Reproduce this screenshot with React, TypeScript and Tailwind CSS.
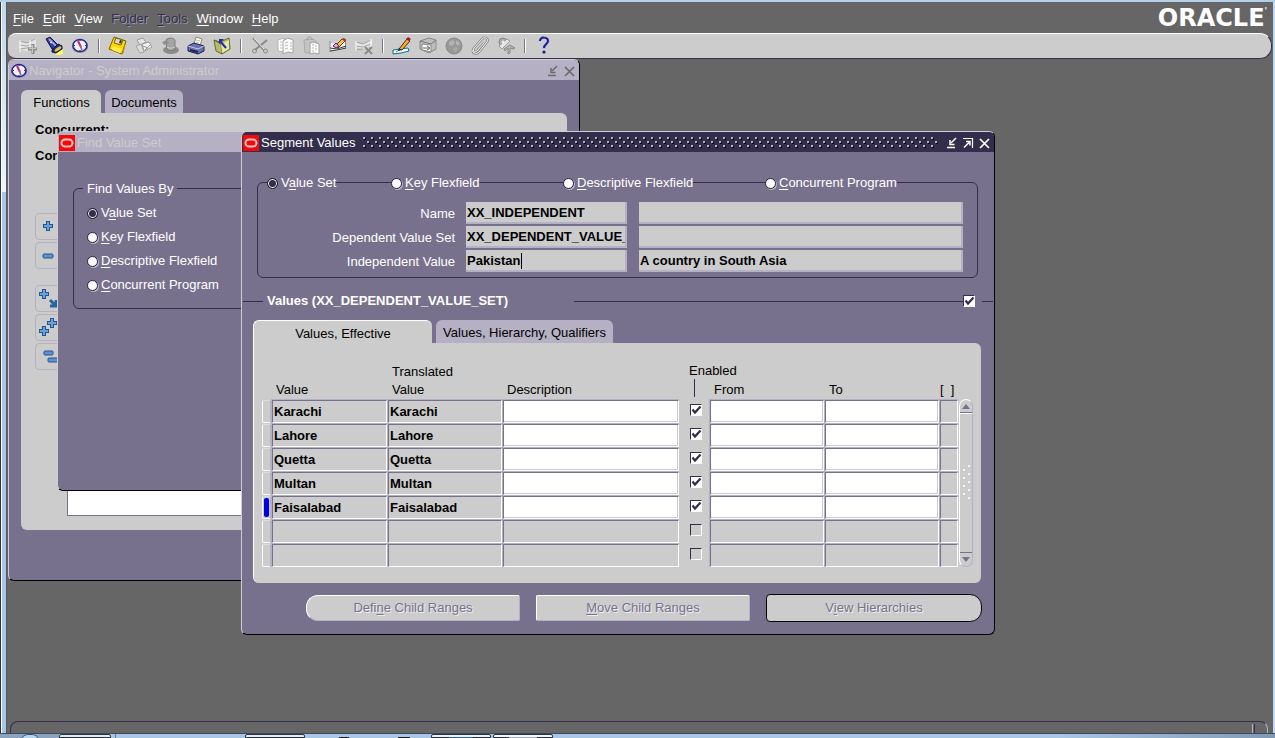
import React from "react";

const menuItems = [
  { key: "F", before: "", after: "ile" },
  { key: "E", before: "", after: "dit" },
  { key: "V", before: "", after: "iew" },
  { key: "l", before: "Fo", after: "der", disabled: true },
  { key: "T", before: "", after: "ools", disabled: true },
  { key: "W", before: "", after: "indow" },
  { key: "H", before: "", after: "elp" },
];

const rows = [
  { value: "Karachi", enabled: true },
  { value: "Lahore", enabled: true },
  { value: "Quetta", enabled: true },
  { value: "Multan", enabled: true },
  { value: "Faisalabad", enabled: true, current: true },
  { value: "", enabled: false },
  { value: "", enabled: false },
];

const findOptions = [
  { key: "a", before: "V", after: "lue Set" },
  { key: "K", before: "", after: "ey Flexfield" },
  { key: "D", before: "", after: "escriptive Flexfield" },
  { key: "C", before: "", after: "oncurrent Program" },
];

const Icon: React.FC<{ children: React.ReactNode }> = ({ children }) => (
  <svg width="20" height="20" viewBox="0 0 20 20" fill="none" aria-hidden="true">
    {children}
  </svg>
);

const NewIcon = () => (
  <Icon>
    <path d="M1 5l8 2 9-4v9l-9 3-8-2z" fill="#e4e4e4" />
    <path d="M1 5l8 2 8-4M1 9l8 1 5-2M1 13l8-1 4-1" stroke="#a5a5a5" />
    <path d="M2 4v12M12 4v8" stroke="#fff" />
    <path d="M15 8v10M10 13h9" stroke="#8e8e8e" strokeWidth="3" />
    <path d="M14.500 9v8M11 12.500h7" stroke="#c4c4c4" />
  </Icon>
);

const FlashlightIcon = () => (
  <Icon>
    <ellipse cx="15" cy="16" rx="4" ry="3" fill="#ffff5a" />
    <path d="M2 3l4-2 8 8-3 5-3-1z" fill="#2f3c9c" stroke="#10104a" />
    <path d="M5 3l7 7" stroke="#9aa6e8" strokeWidth="2" />
    <path d="M8 14l6-6 4 2v3l-6 4-4-1z" fill="#26267a" stroke="#10104a" />
    <ellipse cx="14" cy="13" rx="4" ry="1.5" transform="rotate(-35 14 13)" fill="#d8c83c" />
    <path d="M6 6l2 1" stroke="#fff" />
    <path d="M4 2l1 1" stroke="#d33" />
  </Icon>
);

const CompassIcon = () => (
  <Icon>
    <ellipse cx="10" cy="11" rx="8" ry="6" fill="#8e8eaa" />
    <ellipse cx="10" cy="9.5" rx="7" ry="6" fill="#f2f2fa" stroke="#27278f" strokeWidth="1.6" />
    <path d="M10 4v1M10 14v1M4 9.5h1M15 9.5h1" stroke="#27278f" />
    <path d="M8 5l3 6" stroke="#d0206c" strokeWidth="2" />
    <path d="M10 9l2 5" stroke="#8a5a8c" strokeWidth="1.500" />
  </Icon>
);

const SaveIcon = () => (
  <Icon>
    <path d="M6 1l12 4-4 13-13-5z" fill="#ffd500" stroke="#7d6200" />
    <path d="M8 2l7 2-2 5-7-2z" fill="#d9d9c8" stroke="#7d6200" />
    <path d="M12 4l2 .6-1 3-2-.6z" fill="#333" />
    <path d="M5 10l9 3-2 4-8-3z" fill="#ffec4a" />
    <path d="M15 17l2-9" stroke="#b98f00" />
  </Icon>
);

const NextStepIcon = () => (
  <Icon>
    <path d="M3 4l6-2 3 4-6 3z" fill="#e6e6e6" stroke="#9a9a9a" />
    <path d="M8 8l7-2 3 5-8 4z" fill="#f4f4f4" stroke="#9a9a9a" />
    <path d="M2 10l5-2 3 8-4 1z" fill="#ddd" stroke="#a5a5a5" />
    <path d="M9 10l5 2M11 14l5-5" stroke="#999" />
  </Icon>
);

const ResponsibilityIcon = () => (
  <Icon>
    <ellipse cx="11" cy="14" rx="8" ry="4" fill="#8b8b8b" />
    <path d="M6 4c3-3 8-2 9 0v9c-3 2-6 2-8 0z" fill="#a4a4a4" stroke="#7a7a7a" />
    <path d="M2 6l5-2 2 3-5 2z" fill="#8f8f8f" />
    <path d="M7 11c3 2 6 1 8 0" stroke="#d8d8d8" />
  </Icon>
);

const PrintIcon = () => (
  <Icon>
    <path d="M8 8l2-7 6 2-2 7z" fill="#fff" stroke="#8a8a6a" />
    <path d="M10 4l4 1M10 6l3 1" stroke="#bba" />
    <path d="M2 10l6-3 10 3v5l-6 3-10-3z" fill="#6a72b0" stroke="#1c1c50" />
    <path d="M2 10l10 3 6-3" stroke="#c5c9ea" />
    <path d="M4 14l8 2" stroke="#20204f" strokeWidth="2" />
  </Icon>
);

const CloseFormIcon = () => (
  <Icon>
    <path d="M2 4l6 2 9-4 1 11-8 5-6-3z" fill="#b9b96a" stroke="#6b6b28" />
    <path d="M2 4l7 4 1 10" stroke="#6b6b28" />
    <path d="M9 8l8-4v9l-7 4z" fill="#e6e6a8" />
    <path d="M14 12L8 5" stroke="#1b2fae" strokeWidth="2" />
    <path d="M7 3h5l-5 5z" fill="#1b2fae" />
  </Icon>
);

const CutIcon = () => (
  <Icon>
    <path d="M3 2l11 12M17 4L5 14" stroke="#8a8a8a" strokeWidth="2" />
    <path d="M4 2l10 11" stroke="#eee" />
    <circle cx="15.500" cy="15" r="2" stroke="#8a8a8a" />
    <circle cx="4.500" cy="15" r="2" stroke="#8a8a8a" />
  </Icon>
);

const CopyIcon = () => (
  <Icon>
    <path d="M2 4l6-2v14l-6-1z" fill="#fff" stroke="#b4b4b4" />
    <path d="M7 5l5-3 5 2v13l-5-1-5 2z" fill="#fafafa" stroke="#a4a4a4" />
    <path d="M4 6h2M4 9h2M4 12h2M9 7l3-1M9 10l3-1M9 13l3-1M14 7h2M14 10h2M14 13h2" stroke="#bcbcbc" />
  </Icon>
);

const PasteIcon = () => (
  <Icon>
    <path d="M2 4l9-1 3 2v11l-11 1z" fill="#c4c4c4" stroke="#aaa" />
    <path d="M5 4c0-4 5-4 5 0" stroke="#999" />
    <path d="M8 7l4-1 5 2v10l-5-1-4 1z" fill="#fafafa" stroke="#a0a0a0" />
    <path d="M10 9h2M10 12h2M10 15h2M13 10h2M13 13h2" stroke="#b4b4b4" />
  </Icon>
);

const ClearIcon = () => (
  <Icon>
    <path d="M2 7l7 1 9-4v7l-9 4-7-1z" fill="#f2f2f2" />
    <path d="M2 5v11M17.500 4v9" stroke="#8a8a8a" />
    <path d="M2 12l7 1 9-3M2 15l7-1 9-2" stroke="#3c3c3c" />
    <path d="M7 10l7-7 4 1-8 8z" fill="#f0c050" stroke="#6b3a10" />
    <path d="M5 10l3-3 3 3-3 2z" fill="#e0a8c8" stroke="#5a2a6a" />
    <path d="M14 3l2-1 2 2-2 1z" fill="#b02a10" />
  </Icon>
);

const DeleteIcon = () => (
  <Icon>
    <path d="M2 6l7 2 9-5v6l-9 4-7-2z" fill="#e6e6e6" />
    <path d="M2 6l7 2 8-4M2 10l7 1 8-3M2 14l7-1" stroke="#a5a5a5" />
    <path d="M2 5v10M17 3v8" stroke="#fff" />
    <path d="M11 11l7 7M18 11l-7 7" stroke="#8a8a8a" strokeWidth="2" />
  </Icon>
);

const EditFieldIcon = () => (
  <Icon>
    <path d="M1 14l7-1 8-1 1 3-8 2-8 1z" fill="#e8ffff" stroke="#1a6a80" />
    <path d="M4 16l5-3" stroke="#28a0b0" />
    <path d="M7 13l8-10 3 2-8 9z" fill="#efb03a" stroke="#4a2c08" />
    <path d="M14 3l2-2 3 2-2 2z" fill="#b01818" />
    <path d="M6 15l1-3 3 2z" fill="#222" />
  </Icon>
);

const ZoomIcon = () => (
  <Icon>
    <path d="M2 5l9-3 7 2v9l-7 4-9-4z" fill="#bdbdbd" stroke="#8a8a8a" />
    <path d="M4 8l9 1v7l-9-2z" fill="#fafafa" stroke="#888" />
    <path d="M2 5l11 3 5-4" stroke="#777" />
    <path d="M5 12h6M9 10l3 2-3 2" stroke="#666" />
  </Icon>
);

const GlobeIcon = () => (
  <Icon>
    <circle cx="10" cy="10" r="8" fill="#989898" stroke="#8a8a8a" />
    <path d="M5 6l4-2 2 3-3 3-3-1zM12 4l4 3-2 3-2-2z" fill="#b4b4b4" />
    <path d="M9 12l3-1 2 2-3 4z" fill="#a8a8a8" />
  </Icon>
);

const AttachIcon = () => (
  <Icon>
    <path d="M14 7l-7 8c-2 2-5 0-3-3l8-9c3-3 7 0 5 3l-8 10c-3 3-7 1-6-2" stroke="#8c8c8c" strokeWidth="2.500" />
    <path d="M14 7l-7 8c-2 2-5 0-3-3l8-9c3-3 7 0 5 3l-8 10c-3 3-7 1-6-2" stroke="#f4f4f4" />
  </Icon>
);

const ToolsIcon = () => (
  <Icon>
    <circle cx="7" cy="6" r="4" fill="#aaa" stroke="#888" />
    <path d="M3 10l8-7 3 2-8 8z" fill="#e6e6e6" stroke="#999" />
    <path d="M8 13l6-4 5 3-2 1-3-1v5l-2 1v-6l-3 3z" fill="#b5b5b5" stroke="#8a8a8a" />
    <circle cx="7" cy="6" r="1.500" fill="#eee" />
  </Icon>
);

const HelpIcon = () => (
  <Icon>
    <path d="M6 5c0-5 9-4 8 0 0 3-4 3-4 8" stroke="#b8b8d8" strokeWidth="3" />
    <path d="M6 5c0-5 8-4 8 0 0 3-4 3-4 7" stroke="#1a1a9a" strokeWidth="2" />
    <circle cx="10" cy="16" r="1.600" fill="#1a1a9a" />
  </Icon>
);

const toolGroups = [
  [
    { name: "New", icon: <NewIcon /> },
    { name: "Find", icon: <FlashlightIcon /> },
    { name: "Show Navigator", icon: <CompassIcon /> },
  ],
  [
    { name: "Save", icon: <SaveIcon /> },
    { name: "Next Step", icon: <NextStepIcon /> },
    { name: "Switch Responsibilities", icon: <ResponsibilityIcon /> },
    { name: "Print", icon: <PrintIcon /> },
    { name: "Close Form", icon: <CloseFormIcon /> },
  ],
  [
    { name: "Cut", icon: <CutIcon /> },
    { name: "Copy", icon: <CopyIcon /> },
    { name: "Paste", icon: <PasteIcon /> },
    { name: "Clear Record", icon: <ClearIcon /> },
    { name: "Delete", icon: <DeleteIcon /> },
  ],
  [
    { name: "Edit Field", icon: <EditFieldIcon /> },
    { name: "Zoom", icon: <ZoomIcon /> },
    { name: "Translations", icon: <GlobeIcon /> },
    { name: "Attachments", icon: <AttachIcon /> },
    { name: "Folder Tools", icon: <ToolsIcon /> },
  ],
  [{ name: "Window Help", icon: <HelpIcon /> }],
];

const OracleBadge = () => (
  <svg width="16" height="16" viewBox="0 0 16 16" aria-hidden="true">
    <rect width="16" height="16" fill="#f40808" />
    <rect x="2.500" y="4.500" width="11" height="7" rx="3.500" fill="none" stroke="#ffc4c4" strokeWidth="2" />
  </svg>
);

const MinimizeIcon = () => (
  <svg width="12" height="12" viewBox="0 0 12 12" fill="none" stroke="currentColor" aria-hidden="true">
    <path d="M1 10.500h8" strokeWidth="1.500" />
    <path d="M10 1L5 6" strokeWidth="1.500" />
    <path d="M4 3v4.500h4.500" strokeWidth="1.500" />
  </svg>
);

const MaximizeIcon = () => (
  <svg width="12" height="12" viewBox="0 0 12 12" fill="none" stroke="currentColor" aria-hidden="true">
    <path d="M1 1.500h9.500V11" strokeWidth="1.200" />
    <path d="M2 10.500l5-5M4 4.500h4v4" strokeWidth="1.500" />
  </svg>
);

const CloseIcon = () => (
  <svg width="12" height="12" viewBox="0 0 12 12" fill="none" stroke="currentColor" aria-hidden="true">
    <path d="M2 2l9 9M11 2l-9 9" strokeWidth="1.700" />
  </svg>
);

const Grip = () => (
  <svg className="h-3 min-w-0 flex-1" aria-hidden="true">
    <defs>
      <pattern id="grip" width="8" height="8" patternUnits="userSpaceOnUse">
        <rect x="1" y="1" width="2" height="2" fill="#0c0a18" />
        <rect x="0" y="0" width="2" height="2" fill="#b5b0c4" />
        <rect x="5" y="5" width="2" height="2" fill="#0c0a18" />
        <rect x="4" y="4" width="2" height="2" fill="#b5b0c4" />
      </pattern>
    </defs>
    <rect width="100%" height="11" fill="url(#grip)" />
  </svg>
);

const Mnemonic: React.FC<{ before: string; letter: string; after: string }> = ({
  before,
  letter,
  after,
}) => (
  <span className="whitespace-nowrap">
    {before}
    <span className="underline underline-offset-2">{letter}</span>
    {after}
  </span>
);

const Radio: React.FC<{ name: string; checked: boolean }> = ({ name, checked }) => (
  <input
    type="radio"
    name={name}
    defaultChecked={checked}
    className="size-[11px] shrink-0 appearance-none rounded-full border border-[#221e38] bg-white shadow-[1px_1px_0_#b5b0c4] checked:bg-[#332e4b] checked:shadow-[inset_0_0_0_1px_#ffffff]"
  />
);

const Checkbox: React.FC<{ label: string; checked: boolean }> = ({ label, checked }) => (
  <span className="inline-grid size-3 place-items-center">
    <input
      type="checkbox"
      aria-label={label}
      defaultChecked={checked}
      className="peer col-start-1 row-start-1 size-3 appearance-none border border-t-[#332e4b] border-r-white border-b-white border-l-[#332e4b] checked:bg-white"
    />
    <svg
      className="pointer-events-none invisible col-start-1 row-start-1 peer-checked:visible"
      width="12"
      height="12"
      viewBox="0 0 12 12"
      fill="none"
      aria-hidden="true"
    >
      <path d="M2.500 5.500l2.500 3 5.500-6" stroke="#332e4b" strokeWidth="2.200" />
    </svg>
  </span>
);

const HeaderField: React.FC<{
  label: string;
  value: string;
  description: string;
  focused?: boolean;
}> = ({ label, value, description, focused }) => (
  <div className="flex h-6 items-start">
    <label className="flex w-[197px] shrink-0 justify-end leading-6" htmlFor={label}>
      {label}
    </label>
    <div className="relative ml-[11px]">
      <input
        id={label}
        defaultValue={value}
        className="block h-[22px] w-[161px] border-r-2 border-b-2 border-[#b5b0c4] bg-[#cccccc] pt-px pl-px font-bold text-black outline-none"
      />
      {focused && <span className="absolute top-[3px] left-[55px] h-4 w-px bg-black"></span>}
    </div>
    <input
      aria-label={label + " description"}
      defaultValue={description}
      className="mr-[14px] ml-3 h-[22px] min-w-0 flex-1 border-r-2 border-b-2 border-[#b5b0c4] bg-[#cccccc] pt-px pl-px font-bold text-black outline-none"
    />
  </div>
);

const Cell: React.FC<{ label: string; value?: string; white?: boolean }> = ({
  label,
  value = "",
  white,
}) => (
  <td className="bg-[#b5b0c4] p-0 pt-px pl-px">
    <input
      aria-label={label}
      defaultValue={value}
      className={
        "block h-[23px] w-full border border-t-[#78718d] border-r-white border-b-white border-l-[#78718d] px-px font-bold text-black outline-none " +
        (white ? "bg-white shadow-[inset_-1px_-1px_0_#cccccc]" : "bg-[#cccccc]")
      }
    />
  </td>
);

const ValuesTable = () => (
  <table className="w-full table-fixed border-collapse text-left">
    <colgroup>
      <col className="w-[9px]" />
      <col className="w-[116px]" />
      <col className="w-[115px]" />
      <col />
      <col className="w-[30px]" />
      <col className="w-[115px]" />
      <col className="w-[115px]" />
      <col className="w-[19px]" />
    </colgroup>
    <thead>
      <tr className="h-9 align-bottom leading-[18px]">
        <th className="p-0"></th>
        <th className="p-0 pl-[5px] font-normal">Value</th>
        <th className="p-0 pl-[5px] font-normal">
          Translated
          <br />
          Value
        </th>
        <th className="p-0 pl-[5px] font-normal">Description</th>
        <th className="p-0 align-top font-normal">
          <div className="pl-[10px] leading-4 whitespace-nowrap">Enabled</div>
          <div className="ml-[15px] h-[18px] w-px bg-[#332e4b]"></div>
        </th>
        <th className="p-0 pl-[5px] font-normal">From</th>
        <th className="p-0 pl-[5px] font-normal">To</th>
        <th className="p-0 pl-px font-normal whitespace-pre">{"[  ]"}</th>
      </tr>
    </thead>
    <tbody>
      {rows.map((row, i) => (
        <tr key={i} className="h-6">
          <td className="p-0 pt-px">
            <div className="h-[23px] rounded-xs border border-t-[#dddddd] border-r-[#b5b0c4] border-b-white border-l-white p-px">
              {row.current && <div className="h-full rounded-xs bg-[#0000e6]"></div>}
            </div>
          </td>
          <Cell label="Value" value={row.value} />
          <Cell label="Translated Value" value={row.value} />
          <Cell label="Description" white={row.enabled} />
          <td className="p-0 align-top">
            <div className="flex justify-center pt-[5px] pl-[3px]">
              <Checkbox label="Enabled" checked={row.enabled} />
            </div>
          </td>
          <Cell label="From" white={row.enabled} />
          <Cell label="To" white={row.enabled} />
          <Cell label="Flexfield" />
        </tr>
      ))}
    </tbody>
  </table>
);

const Scrollbar = () => (
  <div className="mt-9 ml-px flex w-[14px] shrink-0 flex-col rounded-full border border-t-white border-r-[#b5b0c4] border-b-[#b5b0c4] border-l-white">
    <button aria-label="Scroll up" className="flex h-[13px] items-center justify-center border-b border-[#78718d]">
      <svg width="8" height="5" viewBox="0 0 8 5" aria-hidden="true">
        <path d="M0 5l4-5 4 5z" fill="#78718d" />
      </svg>
    </button>
    <div className="flex flex-1 items-center justify-center border-t border-white">
      <svg width="10" height="38" viewBox="0 0 10 38" fill="#f4f4f4" aria-hidden="true">
        <path d="M7 1h2v2H7zM2 5h2v2H2zM7 9h2v2H7zM2 13h2v2H2zM7 17h2v2H7zM2 21h2v2H2zM7 25h2v2H7zM2 29h2v2H2zM7 33h2v2H7z" />
      </svg>
    </div>
    <button aria-label="Scroll down" className="flex h-[14px] items-center justify-center border-t border-[#78718d]">
      <svg width="8" height="5" viewBox="0 0 8 5" aria-hidden="true">
        <path d="M0 0l4 5 4-5z" fill="#78718d" />
      </svg>
    </button>
  </div>
);

const NavButton: React.FC<{ label: string; children: React.ReactNode }> = ({ label, children }) => (
  <button
    aria-label={label}
    className="h-[27px] w-7 shrink-0 rounded-sm border border-[#b5b0c4]"
  >
    <svg width="26" height="25" viewBox="0 0 26 25" fill="none" aria-hidden="true">
      {children}
    </svg>
  </button>
);

const NavigatorWindow = () => (
  <section className="absolute top-0 left-px flex h-[522px] w-[572px] flex-col overflow-hidden rounded-md border border-t-[#cfcbd9] border-r-black border-b-black border-l-[#cfcbd9] bg-[#78718d]">
    <header className="flex h-5 items-center bg-[#b5b0c4] pt-px pr-1 text-[#cccccc]">
      <CompassIcon />
      <h2 className="flex-1">Navigator - System Administrator</h2>
      <div className="flex gap-1 text-[#6a6a6a]">
        <button aria-label="Minimize Navigator"><MinimizeIcon /></button>
        <button aria-label="Close Navigator"><CloseIcon /></button>
      </div>
    </header>
    <div className="flex min-h-0 flex-1 flex-col px-3 pt-[10px] pb-[50px] text-black">
      <div className="flex gap-1">
        <button className="h-[23px] w-20 rounded-t-md bg-[#cccccc] pt-[3px] pl-px">Functions</button>
        <button className="h-[23px] w-[78px] rounded-t-md bg-[#b5b0c4] pt-[3px]">Documents</button>
      </div>
      <div className="flex min-h-0 flex-1 flex-col rounded-md rounded-tl-none bg-[#cccccc] px-[14px] pt-2 pb-[14px]">
        <p className="leading-[18px] font-bold">Concurrent:</p>
        <p className="mt-2 leading-[18px] font-bold">Concurrent:</p>
        <div className="mt-12 flex min-h-0 flex-1 gap-1">
          <div className="flex w-7 flex-col gap-[2px]">
            <NavButton label="Expand">
              <path d="M12 7v10M7 12h10" strokeWidth="4" stroke="#24558f" />
              <path d="M12 8v8M8 12h8" strokeWidth="2" stroke="#6ba3dd" />
            </NavButton>
            <NavButton label="Collapse">
              <rect x="7" y="11" width="10" height="4" rx="1" fill="#5b93d0" stroke="#24558f" />
            </NavButton>
            <div className="h-3"></div>
            <NavButton label="Expand Branch">
              <path d="M8 3v10M3 8h10" strokeWidth="4" stroke="#24558f" />
              <path d="M8 4v8M4 8h8" strokeWidth="2" stroke="#6ba3dd" />
              <path d="M14 14l5 5M20 14v6h-6" strokeWidth="3" stroke="#24669f" />
            </NavButton>
            <NavButton label="Expand All">
              <path d="M8 11v10M3 16h10M16 3v10M11 8h10" strokeWidth="4" stroke="#24558f" />
              <path d="M8 12v8M4 16h8M16 4v8M12 8h8" strokeWidth="2" stroke="#6ba3dd" />
            </NavButton>
            <NavButton label="Collapse All">
              <rect x="8" y="7" width="9" height="4" rx="1" fill="#5b93d0" stroke="#24558f" />
              <rect x="12" y="14" width="10" height="4" rx="1" fill="#5b93d0" stroke="#24558f" />
            </NavButton>
          </div>
          <div className="flex-1 border border-[#78718d] bg-white"></div>
        </div>
      </div>
    </div>
  </section>
);

const FindWindow = () => (
  <section className="absolute top-[72px] left-[50px] flex h-[360px] w-[320px] flex-col overflow-hidden rounded-md border border-t-[#cfcbd9] border-r-black border-b-black border-l-[#cfcbd9] bg-[#78718d] text-white">
    <header className="flex h-5 items-center gap-[2px] bg-[#b5b0c4] px-px pt-px text-[#cccccc]">
      <OracleBadge />
      <h2>Find Value Set</h2>
    </header>
    <div className="px-[15px] pt-9">
      <fieldset className="h-[121px] rounded-md border border-[#332e4b]">
        <div className="-mt-2 flex leading-4">
          <span className="ml-[9px] bg-[#78718d] px-1">Find Values By</span>
        </div>
        <div className="pt-1 pl-[13px]">
          {findOptions.map((o, i) => (
            <label key={o.key} className="flex h-6 items-center gap-[3px]">
              <Radio name="find-by" checked={i === 0} />
              <Mnemonic before={o.before} letter={o.key} after={o.after} />
            </label>
          ))}
        </div>
      </fieldset>
    </div>
  </section>
);

const SegmentWindow = () => (
  <section className="absolute top-[72px] left-[234px] flex w-[754px] flex-col overflow-hidden rounded-md border border-t-[#cfcbd9] border-r-black border-b-black border-l-[#cfcbd9] bg-[#78718d] text-white">
    <header className="flex h-5 items-center bg-[#332e4b] pt-px pr-1 pl-px">
      <OracleBadge />
      <h2 className="mr-2 ml-[2px]">Segment Values</h2>
      <Grip />
      <div className="ml-2 flex gap-1">
        <button aria-label="Minimize"><MinimizeIcon /></button>
        <button aria-label="Maximize"><MaximizeIcon /></button>
        <button aria-label="Close"><CloseIcon /></button>
      </div>
    </header>

    <div className="pt-[30px] pr-4 pl-[15px]">
      <fieldset className="h-24 rounded-md border border-[#332e4b]">
        <div className="-mt-2 grid grid-cols-[124px_172px_202px_1fr] pl-[9px] leading-4">
          {findOptions.map((o, i) => (
            <label key={o.key} className="flex items-center gap-[3px] justify-self-start bg-[#78718d]">
              <Radio name="values-by" checked={i === 0} />
              <Mnemonic before={o.before} letter={o.key} after={o.after} />
            </label>
          ))}
        </div>
        <div className="pt-[11px]">
          <HeaderField label="Name" value="XX_INDEPENDENT" description="" />
          <HeaderField label="Dependent Value Set" value="XX_DEPENDENT_VALUE_" description="" />
          <HeaderField label="Independent Value" value="Pakistan" description="A country in South Asia" focused />
        </div>
      </fieldset>
    </div>

    <div className="mt-[14px] flex items-center px-px leading-[18px]">
      <div className="h-px w-5 bg-[#332e4b]"></div>
      <h3 className="ml-1 w-[307px] font-bold">Values (XX_DEPENDENT_VALUE_SET)</h3>
      <div className="h-px flex-1 bg-[#332e4b]"></div>
      <Checkbox label="Show flexfield" checked />
      <div className="ml-[7px] h-px w-[11px] bg-[#332e4b]"></div>
    </div>

    <div className="mt-[10px] pr-[13px] pl-[11px] text-black">
      <div className="flex gap-1">
        <button className="h-[23px] w-[179px] rounded-t-md border-t border-l border-white bg-[#cccccc] pt-[3px]">
          Values, Effective
        </button>
        <button className="h-[23px] w-[177px] rounded-t-md bg-[#b5b0c4] pt-[3px]">
          Values, Hierarchy, Qualifiers
        </button>
      </div>
      <div className="flex rounded-md rounded-tl-none border-l border-white bg-[#cccccc] pt-5 pr-2 pb-4 pl-2">
        <div className="min-w-0 flex-1">
          <ValuesTable />
        </div>
        <Scrollbar />
      </div>
    </div>

    <div className="mt-[11px] mb-3 flex items-center justify-between pr-3 pl-16 text-[#78718d]">
      <button className="h-[26px] w-[214px] rounded-l-xl rounded-r-xs border border-t-white border-r-[#b5b0c4] border-b-[#b5b0c4] border-l-white bg-[#cccccc] text-shadow-[1px_1px_0_#eeeeee]">
        <Mnemonic before="Defi" letter="n" after="e Child Ranges" />
      </button>
      <button className="h-[26px] w-[214px] rounded-xs border border-t-white border-r-[#b5b0c4] border-b-[#b5b0c4] border-l-white bg-[#cccccc] text-shadow-[1px_1px_0_#eeeeee]">
        <Mnemonic before="" letter="M" after="ove Child Ranges" />
      </button>
      <button className="h-7 w-[216px] rounded-l-sm rounded-r-xl border border-black bg-[#cccccc] text-shadow-[1px_1px_0_#eeeeee]">
        <Mnemonic before="V" letter="i" after="ew Hierarchies" />
      </button>
    </div>
  </section>
);

const Taskbar = () => (
  <footer className="flex h-[5px] shrink-0 overflow-hidden border-t border-[#3c4a5c] bg-[#a9c6e6]">
    <div className="flex w-[59px] justify-center bg-[#8ba3bd]">
      <div className="h-4 w-5 rounded-full border border-[#2f5a80] bg-[#b8d4ea]"></div>
    </div>
    <div className="w-[52px] rounded-t-xs border border-[#28323e] bg-[#e4ebf4]"></div>
    <div className="ml-1 w-px bg-[#6a7c90]"></div>
    <div className="ml-[129px] w-[60px] rounded-t-xs border border-[#28323e] bg-[#e8eef7]"></div>
    <div className="mt-[3px] ml-[34px] h-1 w-[10px] bg-[#1c1c1c]"></div>
    <div className="mt-[3px] ml-[49px] h-1 w-3 bg-[#1c1c1c]"></div>
    <div className="ml-[21px] flex w-[60px] justify-center rounded-t-xs border border-[#28323e] bg-[#eef3fa]">
      <div className="mt-[2px] h-1 w-6 bg-[#2f5f9a]"></div>
    </div>
    <div className="ml-[2px] flex w-[60px] justify-center rounded-t-xs border border-[#28323e] bg-[#f6f8fc]">
      <div className="mt-[2px] h-1 w-7 bg-[#a8b4c4]"></div>
    </div>
    <div className="flex-1 bg-gradient-to-r from-[#a9c6e6] from-70% to-[#8199b3]"></div>
  </footer>
);

const App: React.FC = () => {
  return (
    <div className="flex h-screen flex-col overflow-hidden bg-[#b4cde8] font-['Liberation_Sans',Arial,sans-serif] text-[13px]">
      <div className="flex min-h-0 flex-1 pt-[2px]">
        <div className="flex w-[7px] shrink-0 flex-col border-r border-l border-r-[#4c5866] border-l-[#2c333c]">
          <div className="h-[190px] border-l border-white bg-gradient-to-b from-[#c3d6ec] to-[#eef4fb]"></div>
          <div className="flex-1 border-l border-white bg-[#a9c6e6]"></div>
        </div>

        <main className="flex min-w-0 flex-1 flex-col bg-[#666666]">
          <div className="flex h-[31px] shrink-0 items-center justify-between pr-[6px] pl-[6px]">
            <nav className="flex gap-[9px] pt-[2px] text-white">
              {menuItems.map((m) => (
                <button
                  key={m.key}
                  disabled={m.disabled}
                  className="disabled:text-[#332e4b] disabled:text-shadow-[1px_1px_0_#9a96a8]"
                >
                  <Mnemonic before={m.before} letter={m.key} after={m.after} />
                </button>
              ))}
            </nav>
            <div className="flex items-start font-['DejaVu_Sans',sans-serif] text-2xl leading-7 font-bold text-white">
              ORACLE<span className="text-[8px] leading-4">'</span>
            </div>
          </div>

          <div className="mr-px ml-px flex h-[26px] shrink-0 items-center rounded-l-lg rounded-r-xl border-t border-r border-b border-t-white border-r-[#332e4b] border-b-[#332e4b] bg-[#cccccc] pl-[7px]">
            {toolGroups.map((group, i) => (
              <React.Fragment key={i}>
                {i > 0 && (
                  <div className="flex w-3 justify-center">
                    <div className="h-[14px] w-[2px] border-l border-[#78718d] bg-white"></div>
                  </div>
                )}
                {group.map((tool) => (
                  <button
                    key={tool.name}
                    aria-label={tool.name}
                    className="flex w-[26px] items-center justify-center"
                  >
                    {tool.icon}
                  </button>
                ))}
              </React.Fragment>
            ))}
          </div>

          <div className="relative min-h-0 flex-1">
            <NavigatorWindow />
            <FindWindow />
            <SegmentWindow />
          </div>

          <div className="mr-[5px] ml-[3px] flex h-3 shrink-0 justify-end rounded-t-lg border-t border-r border-l border-[#332e4b] border-r-[#b5b0c4] pr-3">
            <div className="mt-[2px] w-[3px] border-r border-l border-r-[#332e4b] border-l-[#b5b0c4]"></div>
          </div>
        </main>

        <div className="w-[2px] shrink-0 bg-[#c3d9f0]"></div>
      </div>
      <Taskbar />
    </div>
  );
};

export default App;
